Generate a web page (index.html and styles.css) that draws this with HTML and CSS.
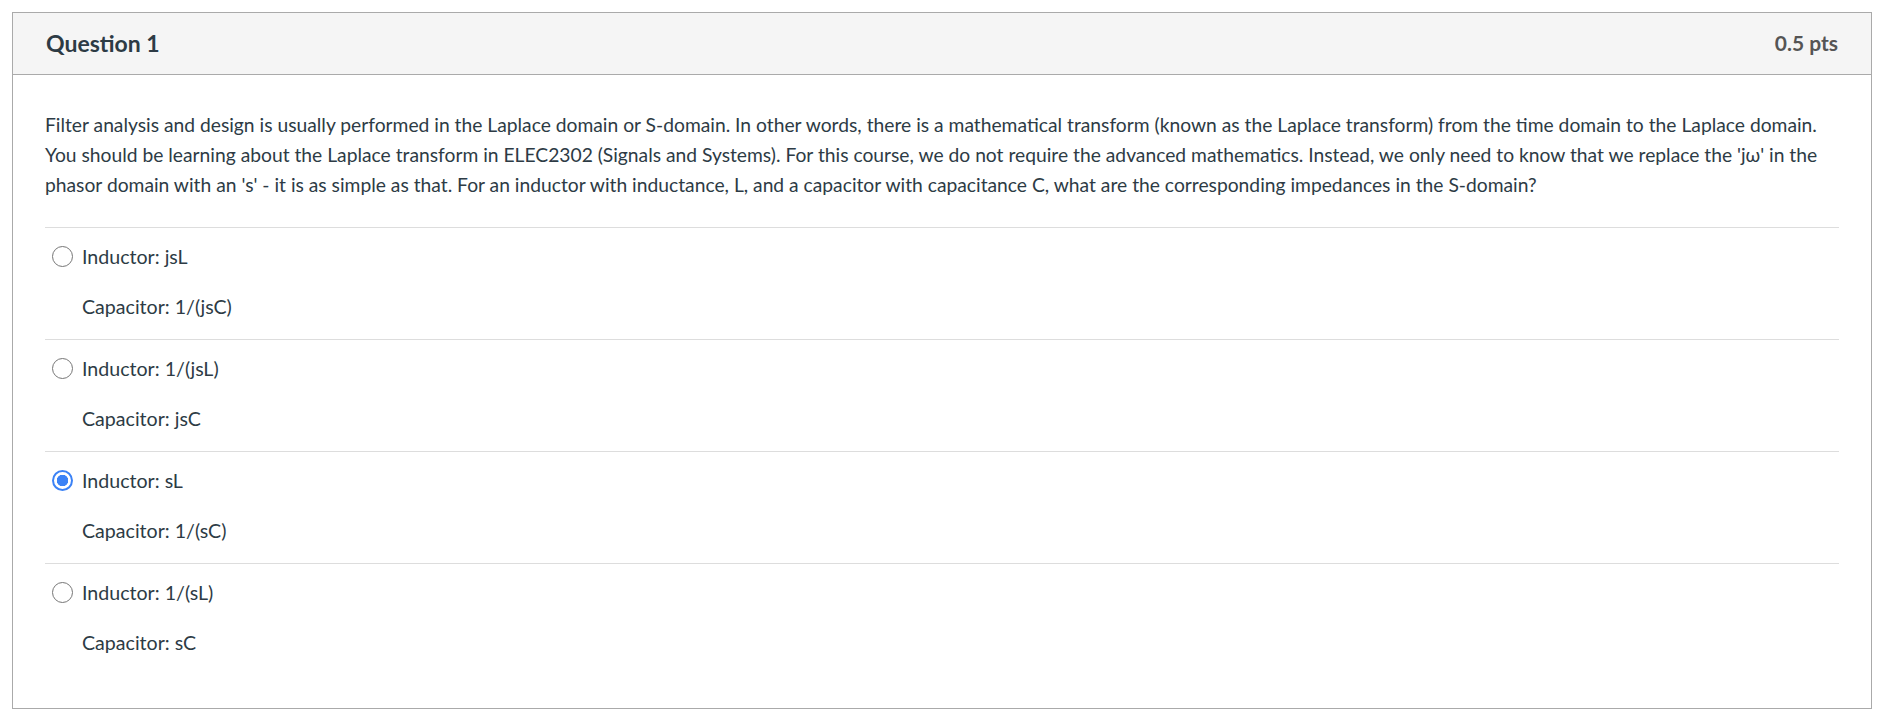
FILE: index.html
```html
<!DOCTYPE html>
<html lang="en">
<head>
<meta charset="utf-8">
<title>Question 1</title>
<link rel="stylesheet" href="styles.css">
</head>
<body>
<div class="question">
  <div class="q-header">
    <span class="q-name">Question 1</span>
    <span class="q-points">0.5 pts</span>
  </div>
  <div class="q-body">
    <p class="q-text">Filter analysis and design is usually performed in the Laplace domain or S-domain. In other words, there is a mathematical transform (known as the Laplace transform) from the time domain to the Laplace domain. You should be learning about the Laplace transform in ELEC2302 (Signals and Systems). For this course, we do not require the advanced mathematics. Instead, we only need to know that we replace the 'jω' in the phasor domain with an 's' - it is as simple as that. For an inductor with inductance, L, and a capacitor with capacitance C, what are the corresponding impedances in the S-domain?</p>
    <div class="answers">
      <label class="answer">
        <span class="row"><span class="radio"></span><span>Inductor: jsL</span></span>
        <span class="row sub">Capacitor: 1/(jsC)</span>
      </label>
      <label class="answer">
        <span class="row"><span class="radio"></span><span>Inductor: 1/(jsL)</span></span>
        <span class="row sub">Capacitor: jsC</span>
      </label>
      <label class="answer">
        <span class="row"><span class="radio checked"></span><span>Inductor: sL</span></span>
        <span class="row sub">Capacitor: 1/(sC)</span>
      </label>
      <label class="answer">
        <span class="row"><span class="radio"></span><span>Inductor: 1/(sL)</span></span>
        <span class="row sub">Capacitor: sC</span>
      </label>
    </div>
  </div>
</div>
</body>
</html>
```

FILE: styles.css
```css
html, body {
  margin: 0;
  padding: 0;
  background: #ffffff;
}
body {
  padding: 12px 14px 0 12px;
  font-family: Lato, "Open Sans", sans-serif;
  color: #2d3b45;
}
.question {
  border: 1px solid #aaaaaa;
  box-sizing: border-box;
  height: 697px;
  display: flex;
  flex-direction: column;
}
.q-header {
  height: 62px;
  box-sizing: border-box;
  background: #f5f5f5;
  border-bottom: 1px solid #aaaaaa;
  display: flex;
  align-items: center;
  justify-content: space-between;
  padding: 0 33px 2px 33px;
}
.q-name {
  font-weight: 700;
  font-size: 23px;
  color: #2d3b45;
}
.q-points {
  font-weight: 700;
  font-size: 21px;
  color: #555555;
}
.q-body {
  padding: 35px 32px 0 32px;
}
.q-text {
  margin: 0 0 27px 0;
  font-size: 19.25px;
  line-height: 30px;
}
.answer {
  display: block;
  border-top: 1px solid #dddddd;
  padding: 13px 0 18px 0;
}
.row {
  display: flex;
  align-items: center;
  height: 30px;
  font-size: 19.6px;
}
.row.sub {
  margin-top: 20px;
  padding-left: 37px;
}
.radio {
  width: 21px;
  height: 21px;
  box-sizing: border-box;
  border: 1.5px solid #767676;
  border-radius: 50%;
  margin: 0 9px 0 7px;
  background: #fff;
  flex: none;
}
.radio.checked {
  border: 2px solid #3b82f6;
  background: radial-gradient(circle, #3b82f6 0 5.5px, #fff 6px);
}
```
